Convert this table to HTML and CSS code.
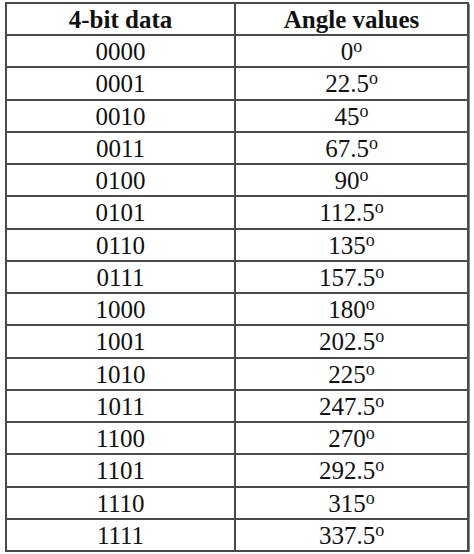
FILE: index.html
```html
<!DOCTYPE html>
<html>
<head>
<meta charset="utf-8">
<link rel="stylesheet" href="styles.css">
</head>
<body>
<div class="table">
  <div class="cell head">4-bit data</div><div class="cell head">Angle values</div>
  <div class="cell">0000</div><div class="cell">0<sup class="deg">o</sup></div>
  <div class="cell">0001</div><div class="cell">22.5<sup class="deg">o</sup></div>
  <div class="cell">0010</div><div class="cell">45<sup class="deg">o</sup></div>
  <div class="cell">0011</div><div class="cell">67.5<sup class="deg">o</sup></div>
  <div class="cell">0100</div><div class="cell">90<sup class="deg">o</sup></div>
  <div class="cell">0101</div><div class="cell">112.5<sup class="deg">o</sup></div>
  <div class="cell">0110</div><div class="cell">135<sup class="deg">o</sup></div>
  <div class="cell">0111</div><div class="cell">157.5<sup class="deg">o</sup></div>
  <div class="cell">1000</div><div class="cell">180<sup class="deg">o</sup></div>
  <div class="cell">1001</div><div class="cell">202.5<sup class="deg">o</sup></div>
  <div class="cell">1010</div><div class="cell">225<sup class="deg">o</sup></div>
  <div class="cell">1011</div><div class="cell">247.5<sup class="deg">o</sup></div>
  <div class="cell">1100</div><div class="cell">270<sup class="deg">o</sup></div>
  <div class="cell">1101</div><div class="cell">292.5<sup class="deg">o</sup></div>
  <div class="cell">1110</div><div class="cell">315<sup class="deg">o</sup></div>
  <div class="cell">1111</div><div class="cell">337.5<sup class="deg">o</sup></div>
</div>
</body>
</html>
```
FILE: styles.css
```css
html, body {
  margin: 0;
  padding: 0;
  background: #ffffff;
}
body {
  padding: 2px 0 0 5px;
  color: #111111;
}
.table {
  display: grid;
  grid-template-columns: 229px 231px;
  grid-auto-rows: 32.24px;
  width: 464px;
  box-sizing: border-box;
  border-top: 2px solid #4a4a4a;
  border-left: 2px solid #4a4a4a;
  border-right: 2px solid #4a4a4a;
  box-shadow: 1px 2px 0 #8a8a8a;
}
.cell {
  box-sizing: border-box;
  border-bottom: 2px solid #4a4a4a;
  text-align: center;
  font-family: "Liberation Serif", "Times New Roman", serif;
  font-size: 25px;
  line-height: 31px;
}
.cell:nth-child(odd) {
  border-right: 2px solid #4a4a4a;
}
.head {
  font-weight: bold;
}
.deg {
  font-size: 18px;
  line-height: 0;
  vertical-align: 8px;
}
```
